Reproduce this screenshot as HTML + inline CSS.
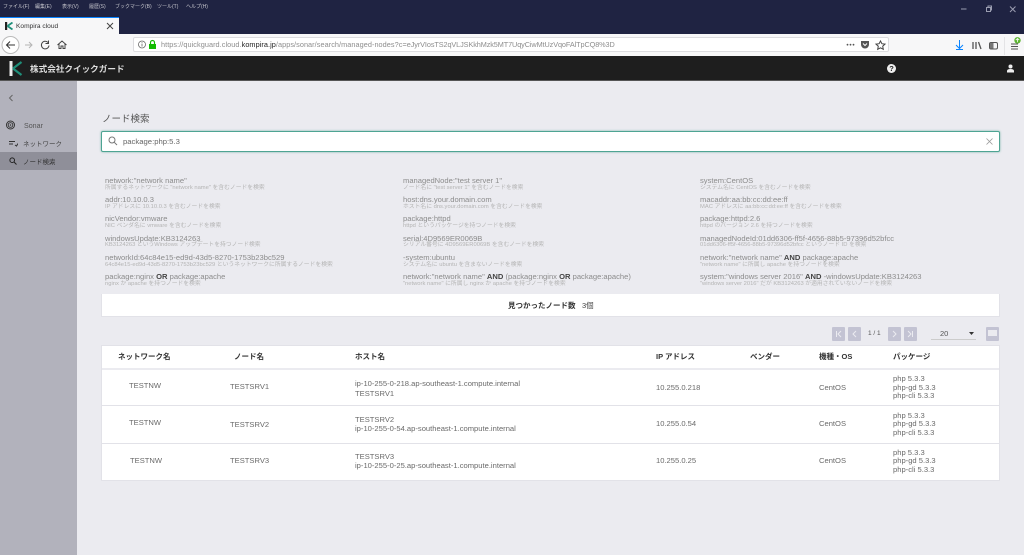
<!DOCTYPE html>
<html lang="ja"><head><meta charset="utf-8"><title>Kompira cloud</title>
<style>
html,body{margin:0;padding:0;width:1024px;height:555px;overflow:hidden;background:#ebebf0;font-family:"Liberation Sans","Noto Sans CJK JP",sans-serif;color:#555}
.a{position:absolute}
.t{position:absolute;white-space:nowrap;line-height:10px}
.h{font-size:7.6px;color:#8c8c8c;line-height:12px}
.s{font-size:5.8px;color:#b4b4b4;line-height:8px}
.h b{color:#444}
.th{font-size:7.5px;color:#333;font-weight:bold}
.td{font-size:7.6px;color:#6a6a6a}
.m{font-size:5px;color:#c5c5cc;line-height:12px}
.pg{position:absolute;top:327px;width:13px;height:14px;background:#c3c3d3;border-radius:1px}
.pg svg{position:absolute;left:0;top:0}
</style></head><body>
<!-- Title bar -->
<div class="a" style="left:0;top:0;width:1024px;height:34px;background:#1f2342"></div>
<div class="t m" style="left:3px;top:1px">ファイル(F)</div>
<div class="t m" style="left:35px;top:1px">編集(E)</div>
<div class="t m" style="left:62px;top:1px">表示(V)</div>
<div class="t m" style="left:89px;top:1px">履歴(S)</div>
<div class="t m" style="left:115px;top:1px">ブックマーク(B)</div>
<div class="t m" style="left:157px;top:1px">ツール(T)</div>
<div class="t m" style="left:186px;top:1px">ヘルプ(H)</div>
<svg class="a" style="left:960px;top:0" width="64" height="18" viewBox="0 0 64 18" fill="none" stroke="#9a9db0" stroke-width="1"><path d="M1 9h5.500"/><rect x="26.500" y="7.500" width="4" height="4"/><path d="M28 7V6h3.500v4h-1"/><path d="M50 6.500l5.500 5.500M55.500 6.500L50 12"/></svg>
<!-- Tab -->
<div class="a" style="left:0;top:17px;width:119px;height:17px;background:#f7f7f8;border-top:1px solid #0a84ff;box-sizing:border-box"></div>
<svg class="a" style="left:5px;top:22px" width="8" height="8" viewBox="0 0 8 8"><rect x="0" y="0" width="2.200" height="8" fill="#222"/><path d="M2.500 4L7.500 0.500M2.500 4L7.500 7.500" stroke="#1f8f7a" stroke-width="1.800" fill="none"/></svg>
<div class="t" style="left:16px;top:21px;font-size:6.600px;color:#333;line-height:11px">Kompira cloud</div>
<svg class="a" style="left:106px;top:22px" width="8" height="8" viewBox="0 0 8 8"><path d="M1 1l6 6M7 1L1 7" stroke="#444" stroke-width="1"/></svg>
<!-- Nav bar -->
<div class="a" style="left:0;top:34px;width:1024px;height:22px;background:#f7f7f8"></div>
<svg class="a" style="left:0;top:34px" width="70" height="22" viewBox="0 0 70 22" fill="none" stroke="#444" stroke-width="1">
<circle cx="10.500" cy="11" r="8.500" fill="#fff" stroke="#bbb"/>
<path d="M15 11H7M10 7.500L6.500 11l3.500 3.500" stroke="#333"/>
<path d="M32 11h-7M29 8l3 3-3 3" stroke="#b5b5b5"/>
<path d="M48 8.500a3.800 3.800 0 1 0 1 3M48.500 6.500v3h-3"/>
<path d="M57.500 11l4.500-4 4.500 4M59 10v4.500h2v-2.500h2v2.500h2V10"/>
</svg>
<div class="a" style="left:133px;top:37px;width:756px;height:15px;background:#fff;border:1px solid #dcdcdf;border-radius:2px;box-sizing:border-box"></div>
<svg class="a" style="left:137px;top:39px" width="24" height="11" viewBox="0 0 24 11" fill="none"><circle cx="5" cy="5.500" r="3.500" stroke="#666" stroke-width=".8"/><path d="M5 4.800v2.700M5 3.300v.8" stroke="#666" stroke-width=".8"/><rect x="12" y="5" width="7" height="5" fill="#12bc00"/><path d="M13.500 5V3.500a2 2 0 0 1 4 0V5" stroke="#12bc00" stroke-width="1.200"/></svg>
<div class="t" style="left:161px;top:40px;font-size:7.300px;color:#8d8d8d;letter-spacing:.06px">https://quickguard.cloud.<span style="color:#222">kompira.jp</span>/apps/sonar/search/managed-nodes?c=<span style="letter-spacing:-.1px">eJyrVIosTS2qVLJSKkhMzk5MT7UqyCiwMtUzVqoFAlTpCQ8%3D</span></div>
<svg class="a" style="left:845px;top:38px" width="44" height="14" viewBox="0 0 44 14"><circle cx="2.500" cy="6.700" r=".9" fill="#555"/><circle cx="5.500" cy="6.700" r=".9" fill="#555"/><circle cx="8.500" cy="6.700" r=".9" fill="#555"/><path d="M16 3h8v3.500a4 4 0 0 1-8 0z" fill="#555"/><path d="M18 5.500l2 2 2-2" stroke="#fff" fill="none"/><path d="M35.500 3l1.400 2.700 3.100.4-2.300 2.100.6 3.100-2.800-1.500-2.800 1.500.6-3.100-2.300-2.100 3.100-.4z" fill="none" stroke="#444"/></svg>
<svg class="a" style="left:950px;top:37px" width="74" height="18" viewBox="0 0 74 18" fill="none" stroke="#555" stroke-width="1">
<path d="M9.500 3v8M6 8l3.500 3.500L13 8M6 12.500h7" stroke="#0a84ff"/>
<path d="M23 5v7M26 5v7M28.500 5l2.500 7" stroke-width="1.300"/>
<rect x="39.500" y="5.500" width="8" height="6.500" rx="1.500"/><rect x="40" y="6" width="3.500" height="5.500" fill="#777" stroke="none"/>
<path d="M61 7h7M61 9.500h7M61 12h7"/>
<path d="M54.500 0v18" stroke="#e4e4e6"/>
<circle cx="67.500" cy="3.300" r="3.200" fill="#5cb531" stroke="none"/><path d="M67.500 5.300V1.500M65.800 3.100l1.700-1.600 1.700 1.600" stroke="#fff" stroke-width=".8"/>
</svg>
<!-- App header -->
<div class="a" style="left:0;top:56px;width:1024px;height:25px;background:#1e1e1e;border-bottom:1px solid #555;box-sizing:border-box"></div>
<svg class="a" style="left:9px;top:61px" width="14" height="15" viewBox="0 0 14 15"><rect x="0.500" y="0" width="3" height="15" fill="#eee"/><path d="M4 7.500L12.500 1M4 7.500L12.500 14" stroke="#1f8f7a" stroke-width="2.200" fill="none"/></svg>
<div class="t" style="left:30px;top:64px;font-size:8.600px;color:#ddd;font-weight:bold">株式会社クイックガード</div>
<div class="a" style="left:887px;top:64px;width:9px;height:9px;border-radius:50%;background:#eee;color:#1e1e1e;font:bold 7.500px/9px 'Liberation Sans',sans-serif;text-align:center">?</div>
<svg class="a" style="left:1006px;top:64px" width="9" height="9" viewBox="0 0 9 9"><circle cx="4.500" cy="2.500" r="2" fill="#eee"/><path d="M1 8.500V7q0-2 3.500-2T8 7v1.500z" fill="#eee"/></svg>
<!-- Sidebar -->
<div class="a" style="left:0;top:81px;width:77px;height:474px;background:#b2b2bc"></div>
<div class="a" style="left:0;top:152px;width:77px;height:18px;background:#8f8f99"></div>
<svg class="a" style="left:8px;top:94px" width="6" height="8" viewBox="0 0 6 8"><path d="M4.500 1L1.500 4l3 3" stroke="#666" fill="none"/></svg>
<svg class="a" style="left:5px;top:120px" width="11" height="10" viewBox="0 0 11 10" fill="none" stroke="#333"><circle cx="5.500" cy="5" r="4"/><circle cx="5.500" cy="5" r="2.300" stroke-width=".9"/><circle cx="5.500" cy="5" r=".8" fill="#333" stroke="none"/></svg>
<div class="t" style="left:24px;top:121px;font-size:7.100px;color:#555">Sonar</div>
<svg class="a" style="left:9px;top:140px" width="9" height="7" viewBox="0 0 9 7" stroke="#333" fill="none"><path d="M0 1.500h6M0 4h4M6 5l1.500 1L9 3.500"/></svg>
<div class="t" style="left:23px;top:139px;font-size:6.500px;color:#444;line-height:11px">ネットワーク</div>
<svg class="a" style="left:9px;top:157px" width="8" height="8" viewBox="0 0 8 8" fill="none" stroke="#222"><circle cx="3.200" cy="3.200" r="2.300"/><path d="M5 5l2.500 2.500"/></svg>
<div class="t" style="left:23px;top:157px;font-size:6.500px;color:#333;line-height:11px">ノード検索</div>
<!-- Search -->
<div class="t" style="left:102px;top:113px;font-size:9.500px;color:#555;line-height:13px">ノード検索</div>
<div class="a" style="left:101px;top:131px;width:899px;height:21px;background:#fff;border:1px solid #4ea493;border-radius:2px;box-sizing:border-box;box-shadow:0 0 2px #7ab5a8"></div>
<svg class="a" style="left:108px;top:136px" width="10" height="10" viewBox="0 0 10 10" fill="none" stroke="#777"><circle cx="4" cy="4" r="3"/><path d="M6.300 6.300L9 9"/></svg>
<div class="t" style="left:123px;top:137px;font-size:7.700px;color:#666">package:php:5.3</div>
<svg class="a" style="left:985px;top:137px" width="9" height="9" viewBox="0 0 9 9"><path d="M1.500 1.500l6 6M7.500 1.500l-6 6" stroke="#999" stroke-width=".8"/></svg>
<!-- Hints col 1 -->
<div class="t h" style="left:105px;top:175px">network:"network name"</div><div class="t s" style="left:105px;top:184px">所属するネットワークに "network name" を含むノードを検索</div>
<div class="t h" style="left:105px;top:194px">addr:10.10.0.3</div><div class="t s" style="left:105px;top:203px">IP アドレスに 10.10.0.3 を含むノードを検索</div>
<div class="t h" style="left:105px;top:213px">nicVendor:vmware</div><div class="t s" style="left:105px;top:222px">NIC ベンダ名に vmware を含むノードを検索</div>
<div class="t h" style="left:105px;top:233px">windowsUpdate:KB3124263</div><div class="t s" style="left:105px;top:241px">KB3124263 というWindows アップデートを持つノード検索</div>
<div class="t h" style="left:105px;top:252px">networkId:64c84e15-ed9d-43d5-8270-1753b23bc529</div><div class="t s" style="left:105px;top:261px">64c84e15-ed9d-43d5-8270-1753b23bc529 というネットワークに所属するノードを検索</div>
<div class="t h" style="left:105px;top:271px">package:nginx <b>OR</b> package:apache</div><div class="t s" style="left:105px;top:280px">nginx か apache を持つノードを検索</div>
<!-- Hints col 2 -->
<div class="t h" style="left:403px;top:175px">managedNode:"test server 1"</div><div class="t s" style="left:403px;top:184px">ノード名に "test server 1" を含むノードを検索</div>
<div class="t h" style="left:403px;top:194px">host:dns.your.domain.com</div><div class="t s" style="left:403px;top:203px">ホスト名に dns.your.domain.com を含むノードを検索</div>
<div class="t h" style="left:403px;top:213px">package:httpd</div><div class="t s" style="left:403px;top:222px">httpd というパッケージを持つノードを検索</div>
<div class="t h" style="left:403px;top:233px">serial:4D9569ER0069B</div><div class="t s" style="left:403px;top:241px">シリアル番号に 4D9569ER0069B を含むノードを検索</div>
<div class="t h" style="left:403px;top:252px">-system:ubuntu</div><div class="t s" style="left:403px;top:261px">システム名に ubuntu を含まないノードを検索</div>
<div class="t h" style="left:403px;top:271px">network:"network name" <b>AND</b> (package:nginx <b>OR</b> package:apache)</div><div class="t s" style="left:403px;top:280px">"network name" に所属し nginx か apache を持つノードを検索</div>
<!-- Hints col 3 -->
<div class="t h" style="left:700px;top:175px">system:CentOS</div><div class="t s" style="left:700px;top:184px">システム名に CentOS を含むノードを検索</div>
<div class="t h" style="left:700px;top:194px">macaddr:aa:bb:cc:dd:ee:ff</div><div class="t s" style="left:700px;top:203px">MAC アドレスに aa:bb:cc:dd:ee:ff を含むノードを検索</div>
<div class="t h" style="left:700px;top:213px">package:httpd:2.6</div><div class="t s" style="left:700px;top:222px">httpd のバージョン 2.6 を持つノードを検索</div>
<div class="t h" style="left:700px;top:233px">managedNodeId:01dd6306-ff5f-4656-88b5-97396d52bfcc</div><div class="t s" style="left:700px;top:241px">01dd6306-ff5f-4656-88b5-97396d52bfcc というノード ID を検索</div>
<div class="t h" style="left:700px;top:252px">network:"network name" <b>AND</b> package:apache</div><div class="t s" style="left:700px;top:261px">"network name" に所属し apache を持つノードを検索</div>
<div class="t h" style="left:700px;top:271px">system:"windows server 2016" <b>AND</b> -windowsUpdate:KB3124263</div><div class="t s" style="left:700px;top:280px">"windows server 2016" だが KB3124263 が適用されていないノードを検索</div>
<!-- Count -->
<div class="a" style="left:101px;top:294px;width:899px;height:23px;background:#fff;border:1px solid #e2e2e8;border-top:0;box-sizing:border-box"></div>
<div class="t" style="left:508px;top:301px;font-size:7.500px;color:#333"><b>見つかったノード数</b></div>
<div class="t" style="left:582px;top:301px;font-size:7.500px;color:#444">3個</div>
<!-- Pagination -->
<div class="pg" style="left:832px"><svg width="13" height="14" viewBox="0 0 13 14" fill="none" stroke="#ebebf0"><path d="M4.500 4v6M9 4L6 7l3 3"/></svg></div>
<div class="pg" style="left:848px"><svg width="13" height="14" viewBox="0 0 13 14" fill="none" stroke="#ebebf0"><path d="M8 4L5 7l3 3"/></svg></div>
<div class="t" style="left:868px;top:329px;font-size:6.500px;color:#555">1 / 1</div>
<div class="pg" style="left:888px"><svg width="13" height="14" viewBox="0 0 13 14" fill="none" stroke="#ebebf0"><path d="M5 4l3 3-3 3"/></svg></div>
<div class="pg" style="left:904px"><svg width="13" height="14" viewBox="0 0 13 14" fill="none" stroke="#ebebf0"><path d="M4 4l3 3-3 3M8.500 4v6"/></svg></div>
<div class="t" style="left:940px;top:329px;font-size:7.500px;color:#555">20</div>
<div class="a" style="left:931px;top:339px;width:45px;height:1px;background:#ccc"></div>
<svg class="a" style="left:969px;top:332px" width="5" height="3" viewBox="0 0 5 3"><path d="M0 0h5L2.500 3z" fill="#333"/></svg>
<div class="a" style="left:986px;top:327px;width:13px;height:14px;background:#c3c3d3;border-radius:1px"><div class="a" style="left:2px;top:3px;width:9px;height:6px;background:#ebebf0"></div></div>
<!-- Table -->
<div class="a" style="left:101px;top:345px;width:899px;height:136px;background:#fff;border:1px solid #e2e2e8;box-sizing:border-box"></div>
<div class="a" style="left:102px;top:368px;width:897px;height:2px;background:#ebebf0"></div>
<div class="a" style="left:102px;top:405px;width:897px;height:1px;background:#e2e2e8"></div>
<div class="a" style="left:102px;top:443px;width:897px;height:1px;background:#e2e2e8"></div>
<div class="t th" style="left:118px;top:352px">ネットワーク名</div>
<div class="t th" style="left:234px;top:352px">ノード名</div>
<div class="t th" style="left:355px;top:352px">ホスト名</div>
<div class="t th" style="left:656px;top:352px">IP アドレス</div>
<div class="t th" style="left:750px;top:352px">ベンダー</div>
<div class="t th" style="left:819px;top:352px">機種・OS</div>
<div class="t th" style="left:893px;top:352px">パッケージ</div>
<!-- Row 1 -->
<div class="t td" style="left:129px;top:381px">TESTNW</div>
<div class="t td" style="left:230px;top:382px">TESTSRV1</div>
<div class="t td" style="left:355px;top:379px">ip-10-255-0-218.ap-southeast-1.compute.internal</div>
<div class="t td" style="left:355px;top:389px">TESTSRV1</div>
<div class="t td" style="left:656px;top:383px">10.255.0.218</div>
<div class="t td" style="left:819px;top:383px">CentOS</div>
<div class="t td" style="left:893px;top:374px">php 5.3.3</div>
<div class="t td" style="left:893px;top:383px">php-gd 5.3.3</div>
<div class="t td" style="left:893px;top:391px">php-cli 5.3.3</div>
<!-- Row 2 -->
<div class="t td" style="left:129px;top:418px">TESTNW</div>
<div class="t td" style="left:230px;top:420px">TESTSRV2</div>
<div class="t td" style="left:355px;top:415px">TESTSRV2</div>
<div class="t td" style="left:355px;top:424px">ip-10-255-0-54.ap-southeast-1.compute.internal</div>
<div class="t td" style="left:656px;top:419px">10.255.0.54</div>
<div class="t td" style="left:819px;top:419px">CentOS</div>
<div class="t td" style="left:893px;top:411px">php 5.3.3</div>
<div class="t td" style="left:893px;top:419px">php-gd 5.3.3</div>
<div class="t td" style="left:893px;top:428px">php-cli 5.3.3</div>
<!-- Row 3 -->
<div class="t td" style="left:130px;top:456px">TESTNW</div>
<div class="t td" style="left:230px;top:456px">TESTSRV3</div>
<div class="t td" style="left:355px;top:452px">TESTSRV3</div>
<div class="t td" style="left:355px;top:461px">ip-10-255-0-25.ap-southeast-1.compute.internal</div>
<div class="t td" style="left:656px;top:456px">10.255.0.25</div>
<div class="t td" style="left:819px;top:456px">CentOS</div>
<div class="t td" style="left:893px;top:448px">php 5.3.3</div>
<div class="t td" style="left:893px;top:456px">php-gd 5.3.3</div>
<div class="t td" style="left:893px;top:465px">php-cli 5.3.3</div>
</body></html>
